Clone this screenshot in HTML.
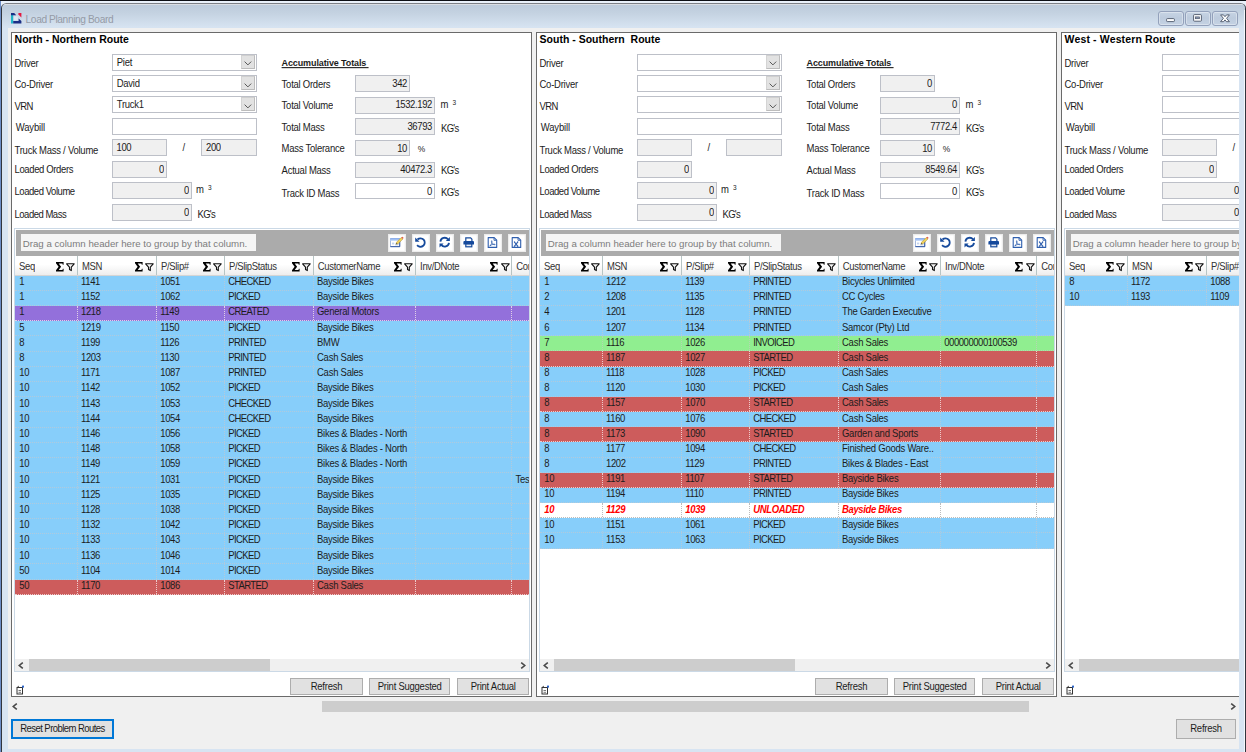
<!DOCTYPE html><html><head><meta charset="utf-8"><title>Load Planning Board</title><style>
*{box-sizing:border-box;margin:0;padding:0}
html,body{width:1246px;height:752px;overflow:hidden}
body{position:relative;background:#e9f1fa;font-family:"Liberation Sans",sans-serif;font-size:9.5px;letter-spacing:-0.25px;color:#1c1c1c;line-height:1}
.a{position:absolute}
.t{position:absolute;white-space:pre;line-height:12px;height:12px;transform:scaleY(1.09);transform-origin:0 9.1px}
i{display:inline-block;font-style:inherit;transform:scaleY(1.09);transform-origin:0 9.4px}
.b{font-weight:bold}
.win{position:absolute;left:1px;top:3px;width:1245px;height:770px;border:1px solid #30353d;border-top-color:#7d8187;border-radius:5.5px 5.5px 0 0;background:#d7e4f2;overflow:hidden}
.tbar{position:absolute;left:0;top:0;width:1243px;height:24px;background:linear-gradient(#dadee4 0,#dadee4 1px,#bccbdb 1px,#c4d2e1 9px,#d6e3f1 23px)}
.client{position:absolute;left:8px;top:28px;width:1231px;height:721px;background:#f0f0f0;overflow:hidden}
.panel{position:absolute;top:4px;width:521px;height:665px;background:#fff;border:1px solid #6a6a6a}
.box{position:absolute;border:1px solid #bdc0c8;background:#fff}
.ro{background:#f0f0f0}
.val{position:absolute;white-space:pre;line-height:12px;height:12px}
.dd{position:absolute;right:1px;top:0;bottom:1px;width:14px;background:#e2e2e2;border:1px solid #bcbcbc;border-top-color:#cfcfcf;border-left-color:#d4d4d4}
.grid{position:absolute;left:3px;top:196px;width:516px;height:444px;border:1px solid #cbd9e6;background:#fff;overflow:hidden}
.gp{position:absolute;left:1px;top:1px;width:513px;height:25.5px;background:#ababab}
.prompt{position:absolute;left:4.5px;top:4.4px;width:235.6px;height:16.5px;background:#f5f5f5;color:#7c7c7c;font-size:9.7px;letter-spacing:0;line-height:19.8px;padding-left:2.2px;overflow:hidden;white-space:pre}
.tb{position:absolute;top:3.6px;width:18.4px;height:18.4px;background:#fff;box-shadow:inset 0 0 0 1.3px #ececec}
.hdr{position:absolute;left:0;top:26.5px;width:514px;height:20.5px;background:linear-gradient(#fff 0,#fff 45%,#ededed 100%);border-bottom:1px solid #d5d5d5}
.hc{position:absolute;top:0;height:19.5px;border-right:1px solid #b7c4c4}
.hc span{position:absolute;left:4.0px;top:5.5px;line-height:12px;white-space:pre;color:#333;letter-spacing:-0.35px;transform:scaleY(1.09);transform-origin:0 9.1px}
.row{position:absolute;left:0;width:514px;border-bottom:1px dotted rgba(205,200,200,.6)}
.c{position:absolute;top:0;height:100%;border-right:1px dotted rgba(205,200,200,.6);white-space:pre;overflow:hidden;padding-left:3.2px}
.hl,.hl .c{border-color:rgba(245,232,232,.8)}
.hw,.hw .c{border-color:rgba(165,165,165,.75)}
.btn{position:absolute;background:#e1e1e1;border:1px solid #adadad;text-align:center;white-space:pre}
.sb{position:absolute;background:#f0f0f0}
.thumb{position:absolute;background:#cdcdcd}
</style></head><body>
<div class="a" style="left:0;top:0;width:1246px;height:1px;background:#0c0f14"></div>
<div class="a" style="left:0;top:1px;width:1px;height:751px;background:#6c8dc6"></div>
<div class="a" style="left:1244px;top:10px;width:1px;height:742px;background:#f3f7fc;z-index:3"></div>
<div class="win"><div class="tbar"></div>
<svg class="a" style="left:9px;top:9px" width="11" height="11" viewBox="0 0 11 11"><rect x="0" y="0" width="2.2" height="10.5" fill="#1fb5c8"/><path d="M0 0H3.2L5.2 2.2H0Z" fill="#1a2f86"/><path d="M2.2 8H7.6L7.6 5.4L10.4 8V10.5H2.2Z" fill="#1a2f86"/><path d="M7.4 0H10.4V4.6L7.4 1.6Z" fill="#e5173f"/><rect x="2.8" y="3.2" width="4" height="4" fill="#dde7f3"/></svg>
<div class="t" style="left:23.6px;top:9.9px;font-size:10.2px;letter-spacing:-0.4px;color:#959ba7;line-height:12px;transform:none">Load Planning Board</div>
<div class="a" style="left:1156px;top:7px;width:26px;height:15px;border:1px solid #93a1bb;border-radius:3px;background:linear-gradient(#c7d4e4,#bdcbdd 45%,#c4d2e3);box-shadow:inset 0 0 0 1px rgba(255,255,255,.35)"><svg class="a" style="left:7px;top:6px" width="10" height="5" viewBox="0 0 10 5"><rect x="0.6" y="0.6" width="7.8" height="3" rx="0.8" fill="#fff" stroke="#4a5568" stroke-width="0.9"/></svg></div>
<div class="a" style="left:1183px;top:7px;width:26px;height:15px;border:1px solid #93a1bb;border-radius:3px;background:linear-gradient(#c7d4e4,#bdcbdd 45%,#c4d2e3);box-shadow:inset 0 0 0 1px rgba(255,255,255,.35)"><svg class="a" style="left:7.3px;top:2.2px" width="10" height="9" viewBox="0 0 10 9"><rect x="0.6" y="0.6" width="7.8" height="6.6" rx="0.8" fill="#fff" stroke="#4a5568" stroke-width="0.9"/><rect x="2.6" y="2.9" width="3.8" height="1.8" fill="#8c9bb8" stroke="#4a5568" stroke-width="0.7"/></svg></div>
<div class="a" style="left:1210px;top:7px;width:26px;height:15px;border:1px solid #93a1bb;border-radius:3px;background:linear-gradient(#c7d4e4,#bdcbdd 45%,#c4d2e3);box-shadow:inset 0 0 0 1px rgba(255,255,255,.35)"><svg class="a" style="left:6.5px;top:1.5px" width="11" height="9" viewBox="0 0 11 9"><path d="M0.6 0.9L3.5 0.9L5 2.7L6.5 0.9L9.4 0.9L6.6 4.3L9.4 7.7L6.5 7.7L5 5.9L3.5 7.7L0.6 7.7L3.4 4.3Z" fill="#fff" stroke="#4a5568" stroke-width="0.9" stroke-linejoin="round"/></svg></div>
</div>
<div class="client">
<div class="panel" style="left:3px">
<div class="t b" style="left:2.60px;top:-0.30px;font-size:10.5px;letter-spacing:0;line-height:13px;height:13px;color:#000;transform:scaleY(1.03);">North - Northern Route</div>
<div class="t " style="left:2.50px;top:24.96px;">Driver</div>
<div class="t " style="left:2.50px;top:45.96px;">Co-Driver</div>
<div class="t " style="left:2.50px;top:67.96px;letter-spacing:-0.6px">VRN</div>
<div class="t " style="left:3.70px;top:88.96px;letter-spacing:-0.14px">Waybill</div>
<div class="t " style="left:2.50px;top:111.96px;">Truck Mass / Volume</div>
<div class="t " style="left:2.50px;top:130.96px;letter-spacing:-0.37px">Loaded Orders</div>
<div class="t " style="left:2.50px;top:152.96px;letter-spacing:-0.45px">Loaded Volume</div>
<div class="t " style="left:2.50px;top:175.96px;letter-spacing:-0.49px">Loaded Mass</div>
<div class="box " style="left:100.10px;top:21.10px;width:144.90px;height:16.50px"><div class="dd"><svg class="a" style="left:2.4px;top:5.4px" width="8" height="5" viewBox="0 0 8 5"><path d="M0.6 0.6L3.9 3.9L7.2 0.6" fill="none" stroke="#575757" stroke-width="1"/></svg></div></div>
<div class="t " style="left:104.70px;top:23.96px;">Piet</div>
<div class="box " style="left:100.10px;top:42.40px;width:144.90px;height:16.50px"><div class="dd"><svg class="a" style="left:2.4px;top:5.4px" width="8" height="5" viewBox="0 0 8 5"><path d="M0.6 0.6L3.9 3.9L7.2 0.6" fill="none" stroke="#575757" stroke-width="1"/></svg></div></div>
<div class="t " style="left:104.70px;top:44.96px;">David</div>
<div class="box " style="left:100.10px;top:63.30px;width:144.90px;height:16.50px"><div class="dd"><svg class="a" style="left:2.4px;top:5.4px" width="8" height="5" viewBox="0 0 8 5"><path d="M0.6 0.6L3.9 3.9L7.2 0.6" fill="none" stroke="#575757" stroke-width="1"/></svg></div></div>
<div class="t " style="left:104.70px;top:65.96px;">Truck1</div>
<div class="box " style="left:100.10px;top:85.40px;width:144.90px;height:16.60px"></div>
<div class="box ro" style="left:100.10px;top:106.40px;width:54.70px;height:16.30px"></div>
<div class="t " style="left:104.50px;top:108.96px;letter-spacing:-0.4px">100</div>
<div class="t " style="left:170.40px;top:108.96px;">/</div>
<div class="box ro" style="left:189.00px;top:106.40px;width:56.00px;height:16.30px"></div>
<div class="t " style="left:194.00px;top:108.96px;letter-spacing:-0.4px">200</div>
<div class="box ro" style="left:100.10px;top:128.20px;width:54.70px;height:16.40px"></div><div class="t" style="right:367.20px;top:130.96px;letter-spacing:-0.4px">0</div>
<div class="box ro" style="left:100.10px;top:149.40px;width:79.70px;height:16.30px"></div><div class="t" style="right:342.20px;top:151.96px;letter-spacing:-0.4px">0</div>
<div class="t " style="left:183.90px;top:150.96px;">m</div>
<div class="t " style="left:196.00px;top:148.95px;font-size:6.5px;">3</div>
<div class="box ro" style="left:100.10px;top:171.30px;width:79.70px;height:16.30px"></div><div class="t" style="right:342.20px;top:173.96px;letter-spacing:-0.4px">0</div>
<div class="t " style="left:185.50px;top:175.96px;letter-spacing:-0.7px">KG&#x27;s</div>
<div class="t b" style="left:269.60px;top:24.13px;font-size:9px;letter-spacing:-0.12px;text-decoration:underline">Accumulative Totals </div>
<div class="t " style="left:269.60px;top:45.96px;">Total Orders</div>
<div class="t " style="left:269.60px;top:66.96px;">Total Volume</div>
<div class="t " style="left:269.60px;top:88.96px;">Total Mass</div>
<div class="t " style="left:269.60px;top:109.96px;">Mass Tolerance</div>
<div class="t " style="left:269.60px;top:131.96px;">Actual Mass</div>
<div class="t " style="left:269.60px;top:154.96px;">Track ID Mass</div>
<div class="box ro" style="left:343.20px;top:42.40px;width:54.80px;height:16.30px"></div><div class="t" style="right:124.00px;top:44.96px;letter-spacing:-0.4px">342</div>
<div class="box ro" style="left:343.20px;top:64.00px;width:79.70px;height:16.70px"></div><div class="t" style="right:99.10px;top:65.96px;letter-spacing:-0.4px">1532.192</div>
<div class="t " style="left:428.50px;top:65.96px;">m</div>
<div class="t " style="left:440.40px;top:63.95px;font-size:6.5px;">3</div>
<div class="box ro" style="left:343.20px;top:85.40px;width:79.70px;height:16.40px"></div><div class="t" style="right:99.10px;top:87.96px;letter-spacing:-0.4px">36793</div>
<div class="t " style="left:429.00px;top:89.96px;letter-spacing:-0.7px">KG&#x27;s</div>
<div class="box ro" style="left:343.20px;top:107.40px;width:54.80px;height:16.10px"></div><div class="t" style="right:124.00px;top:109.96px;letter-spacing:-0.4px">10</div>
<div class="t " style="left:405.80px;top:110.32px;font-size:8.4px;letter-spacing:0">%</div>
<div class="box ro" style="left:343.20px;top:129.10px;width:79.70px;height:16.10px"></div><div class="t" style="right:99.10px;top:130.96px;letter-spacing:-0.4px">40472.3</div>
<div class="t " style="left:429.00px;top:131.96px;letter-spacing:-0.7px">KG&#x27;s</div>
<div class="box " style="left:343.20px;top:150.30px;width:79.70px;height:16.20px"></div><div class="t" style="right:99.10px;top:152.96px;letter-spacing:-0.4px">0</div>
<div class="t " style="left:429.00px;top:153.96px;letter-spacing:-0.7px">KG&#x27;s</div>
<div class="grid" style="left:2.00px;top:195.00px;width:516.00px;height:444.00px">
<div class="gp"><div class="prompt">Drag a column header here to group by that column.</div>
<div class="tb" style="left:372.10px"><svg width="18" height="18" viewBox="0 0 18 18"><defs><linearGradient id="gh" x1="0" y1="0" x2="0" y2="1"><stop offset="0" stop-color="#7fa8ee"/><stop offset="1" stop-color="#c9dcfa"/></linearGradient></defs><rect x="2.6" y="4.6" width="9" height="8" fill="#fff" stroke="#8fa9d6" stroke-width="0.8"/><rect x="2.3" y="4.3" width="9.6" height="2.6" fill="url(#gh)"/><path d="M2.4 12.7H11.8V7" fill="none" stroke="#2f55a4" stroke-width="1"/><rect x="4" y="8.6" width="2.2" height="1.8" fill="#c3d3ee"/><rect x="7" y="9.8" width="3.6" height="1.6" fill="#c3d3ee"/><path d="M8.1 10.2L8.6 8.2L13.2 3.6L14.8 5.1L10.1 9.8Z" fill="#f2d35c" stroke="#a5882a" stroke-width="0.5"/><path d="M13.2 3.6L14 2.9Q14.9 2.6 15.4 3.4Q15.8 4.2 14.8 5.1Z" fill="#e0604f"/><path d="M8.1 10.2L8.45 8.9L9.4 9.8Z" fill="#333"/></svg></div>
<div class="tb" style="left:396.10px"><svg width="18" height="18" viewBox="0 0 18 18"><path d="M5.5 5.5A4.25 4.25 0 1 1 5.1 11.1" fill="none" stroke="#164a9c" stroke-width="1.8"/><path d="M3.2 3.5V7.8H7.6Z" fill="#164a9c"/></svg></div>
<div class="tb" style="left:420.10px"><svg width="18" height="18" viewBox="0 0 18 18"><path d="M4.4 7.6A4.3 4.3 0 0 1 12.1 5.5" fill="none" stroke="#164a9c" stroke-width="1.8"/><path d="M13 8.8A4.3 4.3 0 0 1 5.3 10.9" fill="none" stroke="#164a9c" stroke-width="1.8"/><path d="M13.9 2.9V7H9.8Z" fill="#164a9c"/><path d="M3.5 13.5V9.4H7.6Z" fill="#164a9c"/></svg></div>
<div class="tb" style="left:444.10px"><svg width="18" height="18" viewBox="0 0 18 18"><path d="M5.8 7.4V3.9H10.6L11.9 5.2V7.4" fill="#fff" stroke="#164a9c" stroke-width="1.2"/><path d="M4.5 7H13Q14 7 14 8V10.6H3.4V8Q3.4 7 4.5 7Z" fill="#164a9c"/><rect x="5.8" y="10" width="6" height="2.8" fill="#e4e9f2" stroke="#164a9c" stroke-width="1.2"/></svg></div>
<div class="tb" style="left:468.10px"><svg width="18" height="18" viewBox="0 0 18 18"><path d="M4.2 3.6H10.2L12.7 6.1V13.4H4.2Z" fill="#fff" stroke="#2f5fae" stroke-width="1.1" stroke-linejoin="round"/><path d="M10 3.8V6.3H12.5" fill="none" stroke="#2f5fae" stroke-width="0.9"/><path d="M5.8 12C7.2 10.6 8.2 8.4 8 6.9C7.7 6.2 7.2 7 7.6 8.2C8.2 9.7 9.5 10.8 11.1 10.8C11.7 10.4 10.5 10 9.2 10.3C7.8 10.6 6.5 11.3 5.8 12Z" fill="none" stroke="#2f5fae" stroke-width="0.75"/></svg></div>
<div class="tb" style="left:492.10px"><svg width="18" height="18" viewBox="0 0 18 18"><path d="M4.2 3.6H10.2L12.7 6.1V13.4H4.2Z" fill="#fff" stroke="#2f5fae" stroke-width="1.1" stroke-linejoin="round"/><path d="M10 3.8V6.3H12.5" fill="none" stroke="#2f5fae" stroke-width="0.9"/><path d="M6.3 7.9L9.9 12.3M9.9 7.9L6.3 12.3" fill="none" stroke="#2f5fae" stroke-width="1.1"/><path d="M5.8 12.4H7.2M9 12.4H10.4M5.9 7.8H7.1M9.1 7.8H10.3" stroke="#2f5fae" stroke-width="0.7"/></svg></div>
</div>
<div class="hdr">
<div class="hc" style="left:0.00px;width:62.90px"><span>Seq</span>
<svg class="a" style="left:40.90px;top:6.0px" width="8" height="10" viewBox="0 0 8 10"><path d="M0 0H7.6V2.8H6.8L6.4 1.5H2.7L5.1 4.8L2.7 8H6.4L6.9 6.7H7.6V9.4H0V8.3L2.6 4.8L0 1.3Z" fill="#000"/></svg>
<svg class="a" style="left:51.30px;top:7.0px" width="9" height="9" viewBox="0 0 9 9"><path d="M0.6 0.8H8.2L5.3 4.2V7.6L3.5 6.6V4.2Z" fill="#f4f4f4" stroke="#111" stroke-width="1.1" stroke-linejoin="round"/></svg>
</div>
<div class="hc" style="left:62.90px;width:79.20px"><span>MSN</span>
<svg class="a" style="left:57.20px;top:6.0px" width="8" height="10" viewBox="0 0 8 10"><path d="M0 0H7.6V2.8H6.8L6.4 1.5H2.7L5.1 4.8L2.7 8H6.4L6.9 6.7H7.6V9.4H0V8.3L2.6 4.8L0 1.3Z" fill="#000"/></svg>
<svg class="a" style="left:67.60px;top:7.0px" width="9" height="9" viewBox="0 0 9 9"><path d="M0.6 0.8H8.2L5.3 4.2V7.6L3.5 6.6V4.2Z" fill="#f4f4f4" stroke="#111" stroke-width="1.1" stroke-linejoin="round"/></svg>
</div>
<div class="hc" style="left:142.10px;width:67.90px"><span>P/Slip#</span>
<svg class="a" style="left:45.90px;top:6.0px" width="8" height="10" viewBox="0 0 8 10"><path d="M0 0H7.6V2.8H6.8L6.4 1.5H2.7L5.1 4.8L2.7 8H6.4L6.9 6.7H7.6V9.4H0V8.3L2.6 4.8L0 1.3Z" fill="#000"/></svg>
<svg class="a" style="left:56.30px;top:7.0px" width="9" height="9" viewBox="0 0 9 9"><path d="M0.6 0.8H8.2L5.3 4.2V7.6L3.5 6.6V4.2Z" fill="#f4f4f4" stroke="#111" stroke-width="1.1" stroke-linejoin="round"/></svg>
</div>
<div class="hc" style="left:210.00px;width:88.80px"><span>P/SlipStatus</span>
<svg class="a" style="left:66.80px;top:6.0px" width="8" height="10" viewBox="0 0 8 10"><path d="M0 0H7.6V2.8H6.8L6.4 1.5H2.7L5.1 4.8L2.7 8H6.4L6.9 6.7H7.6V9.4H0V8.3L2.6 4.8L0 1.3Z" fill="#000"/></svg>
<svg class="a" style="left:77.20px;top:7.0px" width="9" height="9" viewBox="0 0 9 9"><path d="M0.6 0.8H8.2L5.3 4.2V7.6L3.5 6.6V4.2Z" fill="#f4f4f4" stroke="#111" stroke-width="1.1" stroke-linejoin="round"/></svg>
</div>
<div class="hc" style="left:298.80px;width:102.30px"><span>CustomerName</span>
<svg class="a" style="left:80.30px;top:6.0px" width="8" height="10" viewBox="0 0 8 10"><path d="M0 0H7.6V2.8H6.8L6.4 1.5H2.7L5.1 4.8L2.7 8H6.4L6.9 6.7H7.6V9.4H0V8.3L2.6 4.8L0 1.3Z" fill="#000"/></svg>
<svg class="a" style="left:90.70px;top:7.0px" width="9" height="9" viewBox="0 0 9 9"><path d="M0.6 0.8H8.2L5.3 4.2V7.6L3.5 6.6V4.2Z" fill="#f4f4f4" stroke="#111" stroke-width="1.1" stroke-linejoin="round"/></svg>
</div>
<div class="hc" style="left:401.10px;width:96.10px"><span>Inv/DNote</span>
<svg class="a" style="left:74.10px;top:6.0px" width="8" height="10" viewBox="0 0 8 10"><path d="M0 0H7.6V2.8H6.8L6.4 1.5H2.7L5.1 4.8L2.7 8H6.4L6.9 6.7H7.6V9.4H0V8.3L2.6 4.8L0 1.3Z" fill="#000"/></svg>
<svg class="a" style="left:84.50px;top:7.0px" width="9" height="9" viewBox="0 0 9 9"><path d="M0.6 0.8H8.2L5.3 4.2V7.6L3.5 6.6V4.2Z" fill="#f4f4f4" stroke="#111" stroke-width="1.1" stroke-linejoin="round"/></svg>
</div>
<div class="hc" style="left:497.20px;width:40.00px"><span>Cor</span>
</div>
</div>
<div class="row" style="top:47px;height:15px;background:#87cefa;line-height:12.10px;">
<div class="c" style="left:0.00px;width:62.90px;padding-left:4.3px;letter-spacing:-0.4px;"><i>1</i></div>
<div class="c" style="left:62.90px;width:79.20px;letter-spacing:-0.4px;"><i>1141</i></div>
<div class="c" style="left:142.10px;width:67.90px;letter-spacing:-0.4px;"><i>1051</i></div>
<div class="c" style="left:210.00px;width:88.80px;letter-spacing:-0.6px;"><i>CHECKED</i></div>
<div class="c" style="left:298.80px;width:102.30px;"><i>Bayside Bikes</i></div>
<div class="c" style="left:401.10px;width:96.10px;letter-spacing:-0.45px;"></div>
<div class="c" style="left:497.20px;width:40.00px;"></div>
</div>
<div class="row" style="top:62px;height:15px;background:#87cefa;line-height:12.50px;">
<div class="c" style="left:0.00px;width:62.90px;padding-left:4.3px;letter-spacing:-0.4px;"><i>1</i></div>
<div class="c" style="left:62.90px;width:79.20px;letter-spacing:-0.4px;"><i>1152</i></div>
<div class="c" style="left:142.10px;width:67.90px;letter-spacing:-0.4px;"><i>1062</i></div>
<div class="c" style="left:210.00px;width:88.80px;letter-spacing:-0.6px;"><i>PICKED</i></div>
<div class="c" style="left:298.80px;width:102.30px;"><i>Bayside Bikes</i></div>
<div class="c" style="left:401.10px;width:96.10px;letter-spacing:-0.45px;"></div>
<div class="c" style="left:497.20px;width:40.00px;"></div>
</div>
<div class="row hl" style="top:77px;height:15px;background:#9370db;line-height:12.90px;">
<div class="c" style="left:0.00px;width:62.90px;padding-left:4.3px;letter-spacing:-0.4px;"><i>1</i></div>
<div class="c" style="left:62.90px;width:79.20px;letter-spacing:-0.4px;"><i>1218</i></div>
<div class="c" style="left:142.10px;width:67.90px;letter-spacing:-0.4px;"><i>1149</i></div>
<div class="c" style="left:210.00px;width:88.80px;letter-spacing:-0.6px;"><i>CREATED</i></div>
<div class="c" style="left:298.80px;width:102.30px;"><i>General Motors</i></div>
<div class="c" style="left:401.10px;width:96.10px;letter-spacing:-0.45px;"></div>
<div class="c" style="left:497.20px;width:40.00px;"></div>
</div>
<div class="row" style="top:92px;height:15px;background:#87cefa;line-height:13.30px;">
<div class="c" style="left:0.00px;width:62.90px;padding-left:4.3px;letter-spacing:-0.4px;"><i>5</i></div>
<div class="c" style="left:62.90px;width:79.20px;letter-spacing:-0.4px;"><i>1219</i></div>
<div class="c" style="left:142.10px;width:67.90px;letter-spacing:-0.4px;"><i>1150</i></div>
<div class="c" style="left:210.00px;width:88.80px;letter-spacing:-0.6px;"><i>PICKED</i></div>
<div class="c" style="left:298.80px;width:102.30px;"><i>Bayside Bikes</i></div>
<div class="c" style="left:401.10px;width:96.10px;letter-spacing:-0.45px;"></div>
<div class="c" style="left:497.20px;width:40.00px;"></div>
</div>
<div class="row" style="top:107px;height:16px;background:#87cefa;line-height:13.70px;">
<div class="c" style="left:0.00px;width:62.90px;padding-left:4.3px;letter-spacing:-0.4px;"><i>8</i></div>
<div class="c" style="left:62.90px;width:79.20px;letter-spacing:-0.4px;"><i>1199</i></div>
<div class="c" style="left:142.10px;width:67.90px;letter-spacing:-0.4px;"><i>1126</i></div>
<div class="c" style="left:210.00px;width:88.80px;letter-spacing:-0.6px;"><i>PRINTED</i></div>
<div class="c" style="left:298.80px;width:102.30px;"><i>BMW</i></div>
<div class="c" style="left:401.10px;width:96.10px;letter-spacing:-0.45px;"></div>
<div class="c" style="left:497.20px;width:40.00px;"></div>
</div>
<div class="row" style="top:123px;height:15px;background:#87cefa;line-height:12.10px;">
<div class="c" style="left:0.00px;width:62.90px;padding-left:4.3px;letter-spacing:-0.4px;"><i>8</i></div>
<div class="c" style="left:62.90px;width:79.20px;letter-spacing:-0.4px;"><i>1203</i></div>
<div class="c" style="left:142.10px;width:67.90px;letter-spacing:-0.4px;"><i>1130</i></div>
<div class="c" style="left:210.00px;width:88.80px;letter-spacing:-0.6px;"><i>PRINTED</i></div>
<div class="c" style="left:298.80px;width:102.30px;"><i>Cash Sales</i></div>
<div class="c" style="left:401.10px;width:96.10px;letter-spacing:-0.45px;"></div>
<div class="c" style="left:497.20px;width:40.00px;"></div>
</div>
<div class="row" style="top:138px;height:15px;background:#87cefa;line-height:12.50px;">
<div class="c" style="left:0.00px;width:62.90px;padding-left:4.3px;letter-spacing:-0.4px;"><i>10</i></div>
<div class="c" style="left:62.90px;width:79.20px;letter-spacing:-0.4px;"><i>1171</i></div>
<div class="c" style="left:142.10px;width:67.90px;letter-spacing:-0.4px;"><i>1087</i></div>
<div class="c" style="left:210.00px;width:88.80px;letter-spacing:-0.6px;"><i>PRINTED</i></div>
<div class="c" style="left:298.80px;width:102.30px;"><i>Cash Sales</i></div>
<div class="c" style="left:401.10px;width:96.10px;letter-spacing:-0.45px;"></div>
<div class="c" style="left:497.20px;width:40.00px;"></div>
</div>
<div class="row" style="top:153px;height:15px;background:#87cefa;line-height:12.90px;">
<div class="c" style="left:0.00px;width:62.90px;padding-left:4.3px;letter-spacing:-0.4px;"><i>10</i></div>
<div class="c" style="left:62.90px;width:79.20px;letter-spacing:-0.4px;"><i>1142</i></div>
<div class="c" style="left:142.10px;width:67.90px;letter-spacing:-0.4px;"><i>1052</i></div>
<div class="c" style="left:210.00px;width:88.80px;letter-spacing:-0.6px;"><i>PICKED</i></div>
<div class="c" style="left:298.80px;width:102.30px;"><i>Bayside Bikes</i></div>
<div class="c" style="left:401.10px;width:96.10px;letter-spacing:-0.45px;"></div>
<div class="c" style="left:497.20px;width:40.00px;"></div>
</div>
<div class="row" style="top:168px;height:15px;background:#87cefa;line-height:13.30px;">
<div class="c" style="left:0.00px;width:62.90px;padding-left:4.3px;letter-spacing:-0.4px;"><i>10</i></div>
<div class="c" style="left:62.90px;width:79.20px;letter-spacing:-0.4px;"><i>1143</i></div>
<div class="c" style="left:142.10px;width:67.90px;letter-spacing:-0.4px;"><i>1053</i></div>
<div class="c" style="left:210.00px;width:88.80px;letter-spacing:-0.6px;"><i>CHECKED</i></div>
<div class="c" style="left:298.80px;width:102.30px;"><i>Bayside Bikes</i></div>
<div class="c" style="left:401.10px;width:96.10px;letter-spacing:-0.45px;"></div>
<div class="c" style="left:497.20px;width:40.00px;"></div>
</div>
<div class="row" style="top:183px;height:16px;background:#87cefa;line-height:13.70px;">
<div class="c" style="left:0.00px;width:62.90px;padding-left:4.3px;letter-spacing:-0.4px;"><i>10</i></div>
<div class="c" style="left:62.90px;width:79.20px;letter-spacing:-0.4px;"><i>1144</i></div>
<div class="c" style="left:142.10px;width:67.90px;letter-spacing:-0.4px;"><i>1054</i></div>
<div class="c" style="left:210.00px;width:88.80px;letter-spacing:-0.6px;"><i>CHECKED</i></div>
<div class="c" style="left:298.80px;width:102.30px;"><i>Bayside Bikes</i></div>
<div class="c" style="left:401.10px;width:96.10px;letter-spacing:-0.45px;"></div>
<div class="c" style="left:497.20px;width:40.00px;"></div>
</div>
<div class="row" style="top:199px;height:15px;background:#87cefa;line-height:12.10px;">
<div class="c" style="left:0.00px;width:62.90px;padding-left:4.3px;letter-spacing:-0.4px;"><i>10</i></div>
<div class="c" style="left:62.90px;width:79.20px;letter-spacing:-0.4px;"><i>1146</i></div>
<div class="c" style="left:142.10px;width:67.90px;letter-spacing:-0.4px;"><i>1056</i></div>
<div class="c" style="left:210.00px;width:88.80px;letter-spacing:-0.6px;"><i>PICKED</i></div>
<div class="c" style="left:298.80px;width:102.30px;"><i>Bikes &amp; Blades - North</i></div>
<div class="c" style="left:401.10px;width:96.10px;letter-spacing:-0.45px;"></div>
<div class="c" style="left:497.20px;width:40.00px;"></div>
</div>
<div class="row" style="top:214px;height:15px;background:#87cefa;line-height:12.50px;">
<div class="c" style="left:0.00px;width:62.90px;padding-left:4.3px;letter-spacing:-0.4px;"><i>10</i></div>
<div class="c" style="left:62.90px;width:79.20px;letter-spacing:-0.4px;"><i>1148</i></div>
<div class="c" style="left:142.10px;width:67.90px;letter-spacing:-0.4px;"><i>1058</i></div>
<div class="c" style="left:210.00px;width:88.80px;letter-spacing:-0.6px;"><i>PICKED</i></div>
<div class="c" style="left:298.80px;width:102.30px;"><i>Bikes &amp; Blades - North</i></div>
<div class="c" style="left:401.10px;width:96.10px;letter-spacing:-0.45px;"></div>
<div class="c" style="left:497.20px;width:40.00px;"></div>
</div>
<div class="row" style="top:229px;height:15px;background:#87cefa;line-height:12.90px;">
<div class="c" style="left:0.00px;width:62.90px;padding-left:4.3px;letter-spacing:-0.4px;"><i>10</i></div>
<div class="c" style="left:62.90px;width:79.20px;letter-spacing:-0.4px;"><i>1149</i></div>
<div class="c" style="left:142.10px;width:67.90px;letter-spacing:-0.4px;"><i>1059</i></div>
<div class="c" style="left:210.00px;width:88.80px;letter-spacing:-0.6px;"><i>PICKED</i></div>
<div class="c" style="left:298.80px;width:102.30px;"><i>Bikes &amp; Blades - North</i></div>
<div class="c" style="left:401.10px;width:96.10px;letter-spacing:-0.45px;"></div>
<div class="c" style="left:497.20px;width:40.00px;"></div>
</div>
<div class="row" style="top:244px;height:15px;background:#87cefa;line-height:13.30px;">
<div class="c" style="left:0.00px;width:62.90px;padding-left:4.3px;letter-spacing:-0.4px;"><i>10</i></div>
<div class="c" style="left:62.90px;width:79.20px;letter-spacing:-0.4px;"><i>1121</i></div>
<div class="c" style="left:142.10px;width:67.90px;letter-spacing:-0.4px;"><i>1031</i></div>
<div class="c" style="left:210.00px;width:88.80px;letter-spacing:-0.6px;"><i>PICKED</i></div>
<div class="c" style="left:298.80px;width:102.30px;"><i>Bayside Bikes</i></div>
<div class="c" style="left:401.10px;width:96.10px;letter-spacing:-0.45px;"></div>
<div class="c" style="left:497.20px;width:40.00px;"><i>Test</i></div>
</div>
<div class="row" style="top:259px;height:16px;background:#87cefa;line-height:13.70px;">
<div class="c" style="left:0.00px;width:62.90px;padding-left:4.3px;letter-spacing:-0.4px;"><i>10</i></div>
<div class="c" style="left:62.90px;width:79.20px;letter-spacing:-0.4px;"><i>1125</i></div>
<div class="c" style="left:142.10px;width:67.90px;letter-spacing:-0.4px;"><i>1035</i></div>
<div class="c" style="left:210.00px;width:88.80px;letter-spacing:-0.6px;"><i>PICKED</i></div>
<div class="c" style="left:298.80px;width:102.30px;"><i>Bayside Bikes</i></div>
<div class="c" style="left:401.10px;width:96.10px;letter-spacing:-0.45px;"></div>
<div class="c" style="left:497.20px;width:40.00px;"></div>
</div>
<div class="row" style="top:275px;height:15px;background:#87cefa;line-height:12.10px;">
<div class="c" style="left:0.00px;width:62.90px;padding-left:4.3px;letter-spacing:-0.4px;"><i>10</i></div>
<div class="c" style="left:62.90px;width:79.20px;letter-spacing:-0.4px;"><i>1128</i></div>
<div class="c" style="left:142.10px;width:67.90px;letter-spacing:-0.4px;"><i>1038</i></div>
<div class="c" style="left:210.00px;width:88.80px;letter-spacing:-0.6px;"><i>PICKED</i></div>
<div class="c" style="left:298.80px;width:102.30px;"><i>Bayside Bikes</i></div>
<div class="c" style="left:401.10px;width:96.10px;letter-spacing:-0.45px;"></div>
<div class="c" style="left:497.20px;width:40.00px;"></div>
</div>
<div class="row" style="top:290px;height:15px;background:#87cefa;line-height:12.50px;">
<div class="c" style="left:0.00px;width:62.90px;padding-left:4.3px;letter-spacing:-0.4px;"><i>10</i></div>
<div class="c" style="left:62.90px;width:79.20px;letter-spacing:-0.4px;"><i>1132</i></div>
<div class="c" style="left:142.10px;width:67.90px;letter-spacing:-0.4px;"><i>1042</i></div>
<div class="c" style="left:210.00px;width:88.80px;letter-spacing:-0.6px;"><i>PICKED</i></div>
<div class="c" style="left:298.80px;width:102.30px;"><i>Bayside Bikes</i></div>
<div class="c" style="left:401.10px;width:96.10px;letter-spacing:-0.45px;"></div>
<div class="c" style="left:497.20px;width:40.00px;"></div>
</div>
<div class="row" style="top:305px;height:15px;background:#87cefa;line-height:12.90px;">
<div class="c" style="left:0.00px;width:62.90px;padding-left:4.3px;letter-spacing:-0.4px;"><i>10</i></div>
<div class="c" style="left:62.90px;width:79.20px;letter-spacing:-0.4px;"><i>1133</i></div>
<div class="c" style="left:142.10px;width:67.90px;letter-spacing:-0.4px;"><i>1043</i></div>
<div class="c" style="left:210.00px;width:88.80px;letter-spacing:-0.6px;"><i>PICKED</i></div>
<div class="c" style="left:298.80px;width:102.30px;"><i>Bayside Bikes</i></div>
<div class="c" style="left:401.10px;width:96.10px;letter-spacing:-0.45px;"></div>
<div class="c" style="left:497.20px;width:40.00px;"></div>
</div>
<div class="row" style="top:320px;height:15px;background:#87cefa;line-height:13.30px;">
<div class="c" style="left:0.00px;width:62.90px;padding-left:4.3px;letter-spacing:-0.4px;"><i>10</i></div>
<div class="c" style="left:62.90px;width:79.20px;letter-spacing:-0.4px;"><i>1136</i></div>
<div class="c" style="left:142.10px;width:67.90px;letter-spacing:-0.4px;"><i>1046</i></div>
<div class="c" style="left:210.00px;width:88.80px;letter-spacing:-0.6px;"><i>PICKED</i></div>
<div class="c" style="left:298.80px;width:102.30px;"><i>Bayside Bikes</i></div>
<div class="c" style="left:401.10px;width:96.10px;letter-spacing:-0.45px;"></div>
<div class="c" style="left:497.20px;width:40.00px;"></div>
</div>
<div class="row" style="top:335px;height:16px;background:#87cefa;line-height:13.70px;">
<div class="c" style="left:0.00px;width:62.90px;padding-left:4.3px;letter-spacing:-0.4px;"><i>50</i></div>
<div class="c" style="left:62.90px;width:79.20px;letter-spacing:-0.4px;"><i>1104</i></div>
<div class="c" style="left:142.10px;width:67.90px;letter-spacing:-0.4px;"><i>1014</i></div>
<div class="c" style="left:210.00px;width:88.80px;letter-spacing:-0.6px;"><i>PICKED</i></div>
<div class="c" style="left:298.80px;width:102.30px;"><i>Bayside Bikes</i></div>
<div class="c" style="left:401.10px;width:96.10px;letter-spacing:-0.45px;"></div>
<div class="c" style="left:497.20px;width:40.00px;"></div>
</div>
<div class="row hl" style="top:351px;height:15px;background:#cd5c5c;line-height:12.10px;">
<div class="c" style="left:0.00px;width:62.90px;padding-left:4.3px;letter-spacing:-0.4px;"><i>50</i></div>
<div class="c" style="left:62.90px;width:79.20px;letter-spacing:-0.4px;"><i>1170</i></div>
<div class="c" style="left:142.10px;width:67.90px;letter-spacing:-0.4px;"><i>1086</i></div>
<div class="c" style="left:210.00px;width:88.80px;letter-spacing:-0.6px;"><i>STARTED</i></div>
<div class="c" style="left:298.80px;width:102.30px;"><i>Cash Sales</i></div>
<div class="c" style="left:401.10px;width:96.10px;letter-spacing:-0.45px;"></div>
<div class="c" style="left:497.20px;width:40.00px;"></div>
</div>
<div class="sb" style="left:0;top:430.00px;width:514px;height:12.5px">
<svg class="a" style="left:3.4px;top:3px" width="6" height="7" viewBox="0 0 6 7"><path d="M4.8 0.6L1.2 3.5L4.8 6.4" fill="none" stroke="#484848" stroke-width="1.6"/></svg>
<div class="thumb" style="left:14px;top:0;width:241px;height:12.5px"></div>
<svg class="a" style="left:504.5px;top:3px" width="6" height="7" viewBox="0 0 6 7"><path d="M1.2 0.6L4.8 3.5L1.2 6.4" fill="none" stroke="#484848" stroke-width="1.6"/></svg>
</div>
</div>
<svg class="a" style="left:3.8px;top:652.0px" width="9" height="10" viewBox="0 0 9 10"><rect x="1" y="2.5" width="5.5" height="6.5" fill="#fff" stroke="#333" stroke-width="1"/><path d="M2.5 5.5H5M2.5 7.3H5" stroke="#555" stroke-width="0.8"/><rect x="6" y="0.6" width="2" height="2" fill="#2a62c8"/><path d="M1 2.5L3 1" stroke="#333" stroke-width="0.8"/></svg>
<div class="btn" style="left:278.20px;top:645.20px;width:72.60px;height:16.80px;line-height:15.6px"><i>Refresh</i></div>
<div class="btn" style="left:357.40px;top:645.20px;width:80.60px;height:16.80px;line-height:15.6px"><i>Print Suggested</i></div>
<div class="btn" style="left:445.00px;top:645.20px;width:72.40px;height:16.80px;line-height:15.6px"><i>Print Actual</i></div>
</div>
<div class="panel" style="left:528px">
<div class="t b" style="left:2.60px;top:-0.30px;font-size:10.5px;letter-spacing:0;line-height:13px;height:13px;color:#000;transform:scaleY(1.03);">South - Southern  Route</div>
<div class="t " style="left:2.50px;top:24.96px;">Driver</div>
<div class="t " style="left:2.50px;top:45.96px;">Co-Driver</div>
<div class="t " style="left:2.50px;top:67.96px;letter-spacing:-0.6px">VRN</div>
<div class="t " style="left:3.70px;top:88.96px;letter-spacing:-0.14px">Waybill</div>
<div class="t " style="left:2.50px;top:111.96px;">Truck Mass / Volume</div>
<div class="t " style="left:2.50px;top:130.96px;letter-spacing:-0.37px">Loaded Orders</div>
<div class="t " style="left:2.50px;top:152.96px;letter-spacing:-0.45px">Loaded Volume</div>
<div class="t " style="left:2.50px;top:175.96px;letter-spacing:-0.49px">Loaded Mass</div>
<div class="box " style="left:100.10px;top:21.10px;width:144.90px;height:16.50px"><div class="dd"><svg class="a" style="left:2.4px;top:5.4px" width="8" height="5" viewBox="0 0 8 5"><path d="M0.6 0.6L3.9 3.9L7.2 0.6" fill="none" stroke="#575757" stroke-width="1"/></svg></div></div>
<div class="box " style="left:100.10px;top:42.40px;width:144.90px;height:16.50px"><div class="dd"><svg class="a" style="left:2.4px;top:5.4px" width="8" height="5" viewBox="0 0 8 5"><path d="M0.6 0.6L3.9 3.9L7.2 0.6" fill="none" stroke="#575757" stroke-width="1"/></svg></div></div>
<div class="box " style="left:100.10px;top:63.30px;width:144.90px;height:16.50px"><div class="dd"><svg class="a" style="left:2.4px;top:5.4px" width="8" height="5" viewBox="0 0 8 5"><path d="M0.6 0.6L3.9 3.9L7.2 0.6" fill="none" stroke="#575757" stroke-width="1"/></svg></div></div>
<div class="box " style="left:100.10px;top:85.40px;width:144.90px;height:16.60px"></div>
<div class="box ro" style="left:100.10px;top:106.40px;width:54.70px;height:16.30px"></div>
<div class="t " style="left:170.40px;top:108.96px;">/</div>
<div class="box ro" style="left:189.00px;top:106.40px;width:56.00px;height:16.30px"></div>
<div class="box ro" style="left:100.10px;top:128.20px;width:54.70px;height:16.40px"></div><div class="t" style="right:367.20px;top:130.96px;letter-spacing:-0.4px">0</div>
<div class="box ro" style="left:100.10px;top:149.40px;width:79.70px;height:16.30px"></div><div class="t" style="right:342.20px;top:151.96px;letter-spacing:-0.4px">0</div>
<div class="t " style="left:183.90px;top:150.96px;">m</div>
<div class="t " style="left:196.00px;top:148.95px;font-size:6.5px;">3</div>
<div class="box ro" style="left:100.10px;top:171.30px;width:79.70px;height:16.30px"></div><div class="t" style="right:342.20px;top:173.96px;letter-spacing:-0.4px">0</div>
<div class="t " style="left:185.50px;top:175.96px;letter-spacing:-0.7px">KG&#x27;s</div>
<div class="t b" style="left:269.60px;top:24.13px;font-size:9px;letter-spacing:-0.12px;text-decoration:underline">Accumulative Totals </div>
<div class="t " style="left:269.60px;top:45.96px;">Total Orders</div>
<div class="t " style="left:269.60px;top:66.96px;">Total Volume</div>
<div class="t " style="left:269.60px;top:88.96px;">Total Mass</div>
<div class="t " style="left:269.60px;top:109.96px;">Mass Tolerance</div>
<div class="t " style="left:269.60px;top:131.96px;">Actual Mass</div>
<div class="t " style="left:269.60px;top:154.96px;">Track ID Mass</div>
<div class="box ro" style="left:343.20px;top:42.40px;width:54.80px;height:16.30px"></div><div class="t" style="right:124.00px;top:44.96px;letter-spacing:-0.4px">0</div>
<div class="box ro" style="left:343.20px;top:64.00px;width:79.70px;height:16.70px"></div><div class="t" style="right:99.10px;top:65.96px;letter-spacing:-0.4px">0</div>
<div class="t " style="left:428.50px;top:65.96px;">m</div>
<div class="t " style="left:440.40px;top:63.95px;font-size:6.5px;">3</div>
<div class="box ro" style="left:343.20px;top:85.40px;width:79.70px;height:16.40px"></div><div class="t" style="right:99.10px;top:87.96px;letter-spacing:-0.4px">7772.4</div>
<div class="t " style="left:429.00px;top:89.96px;letter-spacing:-0.7px">KG&#x27;s</div>
<div class="box ro" style="left:343.20px;top:107.40px;width:54.80px;height:16.10px"></div><div class="t" style="right:124.00px;top:109.96px;letter-spacing:-0.4px">10</div>
<div class="t " style="left:405.80px;top:110.32px;font-size:8.4px;letter-spacing:0">%</div>
<div class="box ro" style="left:343.20px;top:129.10px;width:79.70px;height:16.10px"></div><div class="t" style="right:99.10px;top:130.96px;letter-spacing:-0.4px">8549.64</div>
<div class="t " style="left:429.00px;top:131.96px;letter-spacing:-0.7px">KG&#x27;s</div>
<div class="box " style="left:343.20px;top:150.30px;width:79.70px;height:16.20px"></div><div class="t" style="right:99.10px;top:152.96px;letter-spacing:-0.4px">0</div>
<div class="t " style="left:429.00px;top:153.96px;letter-spacing:-0.7px">KG&#x27;s</div>
<div class="grid" style="left:2.00px;top:195.00px;width:516.00px;height:444.00px">
<div class="gp"><div class="prompt">Drag a column header here to group by that column.</div>
<div class="tb" style="left:372.10px"><svg width="18" height="18" viewBox="0 0 18 18"><defs><linearGradient id="gh" x1="0" y1="0" x2="0" y2="1"><stop offset="0" stop-color="#7fa8ee"/><stop offset="1" stop-color="#c9dcfa"/></linearGradient></defs><rect x="2.6" y="4.6" width="9" height="8" fill="#fff" stroke="#8fa9d6" stroke-width="0.8"/><rect x="2.3" y="4.3" width="9.6" height="2.6" fill="url(#gh)"/><path d="M2.4 12.7H11.8V7" fill="none" stroke="#2f55a4" stroke-width="1"/><rect x="4" y="8.6" width="2.2" height="1.8" fill="#c3d3ee"/><rect x="7" y="9.8" width="3.6" height="1.6" fill="#c3d3ee"/><path d="M8.1 10.2L8.6 8.2L13.2 3.6L14.8 5.1L10.1 9.8Z" fill="#f2d35c" stroke="#a5882a" stroke-width="0.5"/><path d="M13.2 3.6L14 2.9Q14.9 2.6 15.4 3.4Q15.8 4.2 14.8 5.1Z" fill="#e0604f"/><path d="M8.1 10.2L8.45 8.9L9.4 9.8Z" fill="#333"/></svg></div>
<div class="tb" style="left:396.10px"><svg width="18" height="18" viewBox="0 0 18 18"><path d="M5.5 5.5A4.25 4.25 0 1 1 5.1 11.1" fill="none" stroke="#164a9c" stroke-width="1.8"/><path d="M3.2 3.5V7.8H7.6Z" fill="#164a9c"/></svg></div>
<div class="tb" style="left:420.10px"><svg width="18" height="18" viewBox="0 0 18 18"><path d="M4.4 7.6A4.3 4.3 0 0 1 12.1 5.5" fill="none" stroke="#164a9c" stroke-width="1.8"/><path d="M13 8.8A4.3 4.3 0 0 1 5.3 10.9" fill="none" stroke="#164a9c" stroke-width="1.8"/><path d="M13.9 2.9V7H9.8Z" fill="#164a9c"/><path d="M3.5 13.5V9.4H7.6Z" fill="#164a9c"/></svg></div>
<div class="tb" style="left:444.10px"><svg width="18" height="18" viewBox="0 0 18 18"><path d="M5.8 7.4V3.9H10.6L11.9 5.2V7.4" fill="#fff" stroke="#164a9c" stroke-width="1.2"/><path d="M4.5 7H13Q14 7 14 8V10.6H3.4V8Q3.4 7 4.5 7Z" fill="#164a9c"/><rect x="5.8" y="10" width="6" height="2.8" fill="#e4e9f2" stroke="#164a9c" stroke-width="1.2"/></svg></div>
<div class="tb" style="left:468.10px"><svg width="18" height="18" viewBox="0 0 18 18"><path d="M4.2 3.6H10.2L12.7 6.1V13.4H4.2Z" fill="#fff" stroke="#2f5fae" stroke-width="1.1" stroke-linejoin="round"/><path d="M10 3.8V6.3H12.5" fill="none" stroke="#2f5fae" stroke-width="0.9"/><path d="M5.8 12C7.2 10.6 8.2 8.4 8 6.9C7.7 6.2 7.2 7 7.6 8.2C8.2 9.7 9.5 10.8 11.1 10.8C11.7 10.4 10.5 10 9.2 10.3C7.8 10.6 6.5 11.3 5.8 12Z" fill="none" stroke="#2f5fae" stroke-width="0.75"/></svg></div>
<div class="tb" style="left:492.10px"><svg width="18" height="18" viewBox="0 0 18 18"><path d="M4.2 3.6H10.2L12.7 6.1V13.4H4.2Z" fill="#fff" stroke="#2f5fae" stroke-width="1.1" stroke-linejoin="round"/><path d="M10 3.8V6.3H12.5" fill="none" stroke="#2f5fae" stroke-width="0.9"/><path d="M6.3 7.9L9.9 12.3M9.9 7.9L6.3 12.3" fill="none" stroke="#2f5fae" stroke-width="1.1"/><path d="M5.8 12.4H7.2M9 12.4H10.4M5.9 7.8H7.1M9.1 7.8H10.3" stroke="#2f5fae" stroke-width="0.7"/></svg></div>
</div>
<div class="hdr">
<div class="hc" style="left:0.00px;width:62.90px"><span>Seq</span>
<svg class="a" style="left:40.90px;top:6.0px" width="8" height="10" viewBox="0 0 8 10"><path d="M0 0H7.6V2.8H6.8L6.4 1.5H2.7L5.1 4.8L2.7 8H6.4L6.9 6.7H7.6V9.4H0V8.3L2.6 4.8L0 1.3Z" fill="#000"/></svg>
<svg class="a" style="left:51.30px;top:7.0px" width="9" height="9" viewBox="0 0 9 9"><path d="M0.6 0.8H8.2L5.3 4.2V7.6L3.5 6.6V4.2Z" fill="#f4f4f4" stroke="#111" stroke-width="1.1" stroke-linejoin="round"/></svg>
</div>
<div class="hc" style="left:62.90px;width:79.20px"><span>MSN</span>
<svg class="a" style="left:57.20px;top:6.0px" width="8" height="10" viewBox="0 0 8 10"><path d="M0 0H7.6V2.8H6.8L6.4 1.5H2.7L5.1 4.8L2.7 8H6.4L6.9 6.7H7.6V9.4H0V8.3L2.6 4.8L0 1.3Z" fill="#000"/></svg>
<svg class="a" style="left:67.60px;top:7.0px" width="9" height="9" viewBox="0 0 9 9"><path d="M0.6 0.8H8.2L5.3 4.2V7.6L3.5 6.6V4.2Z" fill="#f4f4f4" stroke="#111" stroke-width="1.1" stroke-linejoin="round"/></svg>
</div>
<div class="hc" style="left:142.10px;width:67.90px"><span>P/Slip#</span>
<svg class="a" style="left:45.90px;top:6.0px" width="8" height="10" viewBox="0 0 8 10"><path d="M0 0H7.6V2.8H6.8L6.4 1.5H2.7L5.1 4.8L2.7 8H6.4L6.9 6.7H7.6V9.4H0V8.3L2.6 4.8L0 1.3Z" fill="#000"/></svg>
<svg class="a" style="left:56.30px;top:7.0px" width="9" height="9" viewBox="0 0 9 9"><path d="M0.6 0.8H8.2L5.3 4.2V7.6L3.5 6.6V4.2Z" fill="#f4f4f4" stroke="#111" stroke-width="1.1" stroke-linejoin="round"/></svg>
</div>
<div class="hc" style="left:210.00px;width:88.80px"><span>P/SlipStatus</span>
<svg class="a" style="left:66.80px;top:6.0px" width="8" height="10" viewBox="0 0 8 10"><path d="M0 0H7.6V2.8H6.8L6.4 1.5H2.7L5.1 4.8L2.7 8H6.4L6.9 6.7H7.6V9.4H0V8.3L2.6 4.8L0 1.3Z" fill="#000"/></svg>
<svg class="a" style="left:77.20px;top:7.0px" width="9" height="9" viewBox="0 0 9 9"><path d="M0.6 0.8H8.2L5.3 4.2V7.6L3.5 6.6V4.2Z" fill="#f4f4f4" stroke="#111" stroke-width="1.1" stroke-linejoin="round"/></svg>
</div>
<div class="hc" style="left:298.80px;width:102.30px"><span>CustomerName</span>
<svg class="a" style="left:80.30px;top:6.0px" width="8" height="10" viewBox="0 0 8 10"><path d="M0 0H7.6V2.8H6.8L6.4 1.5H2.7L5.1 4.8L2.7 8H6.4L6.9 6.7H7.6V9.4H0V8.3L2.6 4.8L0 1.3Z" fill="#000"/></svg>
<svg class="a" style="left:90.70px;top:7.0px" width="9" height="9" viewBox="0 0 9 9"><path d="M0.6 0.8H8.2L5.3 4.2V7.6L3.5 6.6V4.2Z" fill="#f4f4f4" stroke="#111" stroke-width="1.1" stroke-linejoin="round"/></svg>
</div>
<div class="hc" style="left:401.10px;width:96.10px"><span>Inv/DNote</span>
<svg class="a" style="left:74.10px;top:6.0px" width="8" height="10" viewBox="0 0 8 10"><path d="M0 0H7.6V2.8H6.8L6.4 1.5H2.7L5.1 4.8L2.7 8H6.4L6.9 6.7H7.6V9.4H0V8.3L2.6 4.8L0 1.3Z" fill="#000"/></svg>
<svg class="a" style="left:84.50px;top:7.0px" width="9" height="9" viewBox="0 0 9 9"><path d="M0.6 0.8H8.2L5.3 4.2V7.6L3.5 6.6V4.2Z" fill="#f4f4f4" stroke="#111" stroke-width="1.1" stroke-linejoin="round"/></svg>
</div>
<div class="hc" style="left:497.20px;width:40.00px"><span>Cor</span>
</div>
</div>
<div class="row" style="top:47px;height:15px;background:#87cefa;line-height:12.10px;">
<div class="c" style="left:0.00px;width:62.90px;padding-left:4.3px;letter-spacing:-0.4px;"><i>1</i></div>
<div class="c" style="left:62.90px;width:79.20px;letter-spacing:-0.4px;"><i>1212</i></div>
<div class="c" style="left:142.10px;width:67.90px;letter-spacing:-0.4px;"><i>1139</i></div>
<div class="c" style="left:210.00px;width:88.80px;letter-spacing:-0.6px;"><i>PRINTED</i></div>
<div class="c" style="left:298.80px;width:102.30px;"><i>Bicycles Unlimited</i></div>
<div class="c" style="left:401.10px;width:96.10px;letter-spacing:-0.45px;"></div>
<div class="c" style="left:497.20px;width:40.00px;"></div>
</div>
<div class="row" style="top:62px;height:15px;background:#87cefa;line-height:12.44px;">
<div class="c" style="left:0.00px;width:62.90px;padding-left:4.3px;letter-spacing:-0.4px;"><i>2</i></div>
<div class="c" style="left:62.90px;width:79.20px;letter-spacing:-0.4px;"><i>1208</i></div>
<div class="c" style="left:142.10px;width:67.90px;letter-spacing:-0.4px;"><i>1135</i></div>
<div class="c" style="left:210.00px;width:88.80px;letter-spacing:-0.6px;"><i>PRINTED</i></div>
<div class="c" style="left:298.80px;width:102.30px;"><i>CC Cycles</i></div>
<div class="c" style="left:401.10px;width:96.10px;letter-spacing:-0.45px;"></div>
<div class="c" style="left:497.20px;width:40.00px;"></div>
</div>
<div class="row" style="top:77px;height:15px;background:#87cefa;line-height:12.78px;">
<div class="c" style="left:0.00px;width:62.90px;padding-left:4.3px;letter-spacing:-0.4px;"><i>4</i></div>
<div class="c" style="left:62.90px;width:79.20px;letter-spacing:-0.4px;"><i>1201</i></div>
<div class="c" style="left:142.10px;width:67.90px;letter-spacing:-0.4px;"><i>1128</i></div>
<div class="c" style="left:210.00px;width:88.80px;letter-spacing:-0.6px;"><i>PRINTED</i></div>
<div class="c" style="left:298.80px;width:102.30px;"><i>The Garden Executive</i></div>
<div class="c" style="left:401.10px;width:96.10px;letter-spacing:-0.45px;"></div>
<div class="c" style="left:497.20px;width:40.00px;"></div>
</div>
<div class="row" style="top:92px;height:15px;background:#87cefa;line-height:13.12px;">
<div class="c" style="left:0.00px;width:62.90px;padding-left:4.3px;letter-spacing:-0.4px;"><i>6</i></div>
<div class="c" style="left:62.90px;width:79.20px;letter-spacing:-0.4px;"><i>1207</i></div>
<div class="c" style="left:142.10px;width:67.90px;letter-spacing:-0.4px;"><i>1134</i></div>
<div class="c" style="left:210.00px;width:88.80px;letter-spacing:-0.6px;"><i>PRINTED</i></div>
<div class="c" style="left:298.80px;width:102.30px;"><i>Samcor (Pty) Ltd</i></div>
<div class="c" style="left:401.10px;width:96.10px;letter-spacing:-0.45px;"></div>
<div class="c" style="left:497.20px;width:40.00px;"></div>
</div>
<div class="row" style="top:107px;height:15px;background:#90ee90;line-height:13.46px;">
<div class="c" style="left:0.00px;width:62.90px;padding-left:4.3px;letter-spacing:-0.4px;"><i>7</i></div>
<div class="c" style="left:62.90px;width:79.20px;letter-spacing:-0.4px;"><i>1116</i></div>
<div class="c" style="left:142.10px;width:67.90px;letter-spacing:-0.4px;"><i>1026</i></div>
<div class="c" style="left:210.00px;width:88.80px;letter-spacing:-0.6px;"><i>INVOICED</i></div>
<div class="c" style="left:298.80px;width:102.30px;"><i>Cash Sales</i></div>
<div class="c" style="left:401.10px;width:96.10px;letter-spacing:-0.45px;"><i>000000000100539</i></div>
<div class="c" style="left:497.20px;width:40.00px;"></div>
</div>
<div class="row hl" style="top:122px;height:16px;background:#cd5c5c;line-height:13.80px;">
<div class="c" style="left:0.00px;width:62.90px;padding-left:4.3px;letter-spacing:-0.4px;"><i>8</i></div>
<div class="c" style="left:62.90px;width:79.20px;letter-spacing:-0.4px;"><i>1187</i></div>
<div class="c" style="left:142.10px;width:67.90px;letter-spacing:-0.4px;"><i>1027</i></div>
<div class="c" style="left:210.00px;width:88.80px;letter-spacing:-0.6px;"><i>STARTED</i></div>
<div class="c" style="left:298.80px;width:102.30px;"><i>Cash Sales</i></div>
<div class="c" style="left:401.10px;width:96.10px;letter-spacing:-0.45px;"></div>
<div class="c" style="left:497.20px;width:40.00px;"></div>
</div>
<div class="row" style="top:138px;height:15px;background:#87cefa;line-height:12.14px;">
<div class="c" style="left:0.00px;width:62.90px;padding-left:4.3px;letter-spacing:-0.4px;"><i>8</i></div>
<div class="c" style="left:62.90px;width:79.20px;letter-spacing:-0.4px;"><i>1118</i></div>
<div class="c" style="left:142.10px;width:67.90px;letter-spacing:-0.4px;"><i>1028</i></div>
<div class="c" style="left:210.00px;width:88.80px;letter-spacing:-0.6px;"><i>PICKED</i></div>
<div class="c" style="left:298.80px;width:102.30px;"><i>Cash Sales</i></div>
<div class="c" style="left:401.10px;width:96.10px;letter-spacing:-0.45px;"></div>
<div class="c" style="left:497.20px;width:40.00px;"></div>
</div>
<div class="row" style="top:153px;height:15px;background:#87cefa;line-height:12.48px;">
<div class="c" style="left:0.00px;width:62.90px;padding-left:4.3px;letter-spacing:-0.4px;"><i>8</i></div>
<div class="c" style="left:62.90px;width:79.20px;letter-spacing:-0.4px;"><i>1120</i></div>
<div class="c" style="left:142.10px;width:67.90px;letter-spacing:-0.4px;"><i>1030</i></div>
<div class="c" style="left:210.00px;width:88.80px;letter-spacing:-0.6px;"><i>PICKED</i></div>
<div class="c" style="left:298.80px;width:102.30px;"><i>Cash Sales</i></div>
<div class="c" style="left:401.10px;width:96.10px;letter-spacing:-0.45px;"></div>
<div class="c" style="left:497.20px;width:40.00px;"></div>
</div>
<div class="row hl" style="top:168px;height:15px;background:#cd5c5c;line-height:12.82px;">
<div class="c" style="left:0.00px;width:62.90px;padding-left:4.3px;letter-spacing:-0.4px;"><i>8</i></div>
<div class="c" style="left:62.90px;width:79.20px;letter-spacing:-0.4px;"><i>1157</i></div>
<div class="c" style="left:142.10px;width:67.90px;letter-spacing:-0.4px;"><i>1070</i></div>
<div class="c" style="left:210.00px;width:88.80px;letter-spacing:-0.6px;"><i>STARTED</i></div>
<div class="c" style="left:298.80px;width:102.30px;"><i>Cash Sales</i></div>
<div class="c" style="left:401.10px;width:96.10px;letter-spacing:-0.45px;"></div>
<div class="c" style="left:497.20px;width:40.00px;"></div>
</div>
<div class="row" style="top:183px;height:15px;background:#87cefa;line-height:13.16px;">
<div class="c" style="left:0.00px;width:62.90px;padding-left:4.3px;letter-spacing:-0.4px;"><i>8</i></div>
<div class="c" style="left:62.90px;width:79.20px;letter-spacing:-0.4px;"><i>1160</i></div>
<div class="c" style="left:142.10px;width:67.90px;letter-spacing:-0.4px;"><i>1076</i></div>
<div class="c" style="left:210.00px;width:88.80px;letter-spacing:-0.6px;"><i>CHECKED</i></div>
<div class="c" style="left:298.80px;width:102.30px;"><i>Cash Sales</i></div>
<div class="c" style="left:401.10px;width:96.10px;letter-spacing:-0.45px;"></div>
<div class="c" style="left:497.20px;width:40.00px;"></div>
</div>
<div class="row hl" style="top:198px;height:15px;background:#cd5c5c;line-height:13.50px;">
<div class="c" style="left:0.00px;width:62.90px;padding-left:4.3px;letter-spacing:-0.4px;"><i>8</i></div>
<div class="c" style="left:62.90px;width:79.20px;letter-spacing:-0.4px;"><i>1173</i></div>
<div class="c" style="left:142.10px;width:67.90px;letter-spacing:-0.4px;"><i>1090</i></div>
<div class="c" style="left:210.00px;width:88.80px;letter-spacing:-0.6px;"><i>STARTED</i></div>
<div class="c" style="left:298.80px;width:102.30px;"><i>Garden and Sports</i></div>
<div class="c" style="left:401.10px;width:96.10px;letter-spacing:-0.45px;"></div>
<div class="c" style="left:497.20px;width:40.00px;"></div>
</div>
<div class="row" style="top:213px;height:16px;background:#87cefa;line-height:13.84px;">
<div class="c" style="left:0.00px;width:62.90px;padding-left:4.3px;letter-spacing:-0.4px;"><i>8</i></div>
<div class="c" style="left:62.90px;width:79.20px;letter-spacing:-0.4px;"><i>1177</i></div>
<div class="c" style="left:142.10px;width:67.90px;letter-spacing:-0.4px;"><i>1094</i></div>
<div class="c" style="left:210.00px;width:88.80px;letter-spacing:-0.6px;"><i>CHECKED</i></div>
<div class="c" style="left:298.80px;width:102.30px;"><i>Finished Goods Ware..</i></div>
<div class="c" style="left:401.10px;width:96.10px;letter-spacing:-0.45px;"></div>
<div class="c" style="left:497.20px;width:40.00px;"></div>
</div>
<div class="row" style="top:229px;height:15px;background:#87cefa;line-height:12.18px;">
<div class="c" style="left:0.00px;width:62.90px;padding-left:4.3px;letter-spacing:-0.4px;"><i>8</i></div>
<div class="c" style="left:62.90px;width:79.20px;letter-spacing:-0.4px;"><i>1202</i></div>
<div class="c" style="left:142.10px;width:67.90px;letter-spacing:-0.4px;"><i>1129</i></div>
<div class="c" style="left:210.00px;width:88.80px;letter-spacing:-0.6px;"><i>PRINTED</i></div>
<div class="c" style="left:298.80px;width:102.30px;"><i>Bikes &amp; Blades - East</i></div>
<div class="c" style="left:401.10px;width:96.10px;letter-spacing:-0.45px;"></div>
<div class="c" style="left:497.20px;width:40.00px;"></div>
</div>
<div class="row hl" style="top:244px;height:15px;background:#cd5c5c;line-height:12.52px;">
<div class="c" style="left:0.00px;width:62.90px;padding-left:4.3px;letter-spacing:-0.4px;"><i>10</i></div>
<div class="c" style="left:62.90px;width:79.20px;letter-spacing:-0.4px;"><i>1191</i></div>
<div class="c" style="left:142.10px;width:67.90px;letter-spacing:-0.4px;"><i>1107</i></div>
<div class="c" style="left:210.00px;width:88.80px;letter-spacing:-0.6px;"><i>STARTED</i></div>
<div class="c" style="left:298.80px;width:102.30px;"><i>Bayside Bikes</i></div>
<div class="c" style="left:401.10px;width:96.10px;letter-spacing:-0.45px;"></div>
<div class="c" style="left:497.20px;width:40.00px;"></div>
</div>
<div class="row" style="top:259px;height:15px;background:#87cefa;line-height:12.86px;">
<div class="c" style="left:0.00px;width:62.90px;padding-left:4.3px;letter-spacing:-0.4px;"><i>10</i></div>
<div class="c" style="left:62.90px;width:79.20px;letter-spacing:-0.4px;"><i>1194</i></div>
<div class="c" style="left:142.10px;width:67.90px;letter-spacing:-0.4px;"><i>1110</i></div>
<div class="c" style="left:210.00px;width:88.80px;letter-spacing:-0.6px;"><i>PRINTED</i></div>
<div class="c" style="left:298.80px;width:102.30px;"><i>Bayside Bikes</i></div>
<div class="c" style="left:401.10px;width:96.10px;letter-spacing:-0.45px;"></div>
<div class="c" style="left:497.20px;width:40.00px;"></div>
</div>
<div class="row hw" style="top:274px;height:15px;background:#ffffff;line-height:13.20px;color:#ff0000;font-weight:bold;font-style:italic;letter-spacing:-0.35px;">
<div class="c" style="left:0.00px;width:62.90px;padding-left:4.3px;"><i>10</i></div>
<div class="c" style="left:62.90px;width:79.20px;"><i>1129</i></div>
<div class="c" style="left:142.10px;width:67.90px;"><i>1039</i></div>
<div class="c" style="left:210.00px;width:88.80px;"><i>UNLOADED</i></div>
<div class="c" style="left:298.80px;width:102.30px;"><i>Bayside Bikes</i></div>
<div class="c" style="left:401.10px;width:96.10px;"></div>
<div class="c" style="left:497.20px;width:40.00px;"></div>
</div>
<div class="row" style="top:289px;height:15px;background:#87cefa;line-height:13.54px;">
<div class="c" style="left:0.00px;width:62.90px;padding-left:4.3px;letter-spacing:-0.4px;"><i>10</i></div>
<div class="c" style="left:62.90px;width:79.20px;letter-spacing:-0.4px;"><i>1151</i></div>
<div class="c" style="left:142.10px;width:67.90px;letter-spacing:-0.4px;"><i>1061</i></div>
<div class="c" style="left:210.00px;width:88.80px;letter-spacing:-0.6px;"><i>PICKED</i></div>
<div class="c" style="left:298.80px;width:102.30px;"><i>Bayside Bikes</i></div>
<div class="c" style="left:401.10px;width:96.10px;letter-spacing:-0.45px;"></div>
<div class="c" style="left:497.20px;width:40.00px;"></div>
</div>
<div class="row" style="top:304px;height:16px;background:#87cefa;line-height:13.88px;">
<div class="c" style="left:0.00px;width:62.90px;padding-left:4.3px;letter-spacing:-0.4px;"><i>10</i></div>
<div class="c" style="left:62.90px;width:79.20px;letter-spacing:-0.4px;"><i>1153</i></div>
<div class="c" style="left:142.10px;width:67.90px;letter-spacing:-0.4px;"><i>1063</i></div>
<div class="c" style="left:210.00px;width:88.80px;letter-spacing:-0.6px;"><i>PICKED</i></div>
<div class="c" style="left:298.80px;width:102.30px;"><i>Bayside Bikes</i></div>
<div class="c" style="left:401.10px;width:96.10px;letter-spacing:-0.45px;"></div>
<div class="c" style="left:497.20px;width:40.00px;"></div>
</div>
<div class="sb" style="left:0;top:430.00px;width:514px;height:12.5px">
<svg class="a" style="left:3.4px;top:3px" width="6" height="7" viewBox="0 0 6 7"><path d="M4.8 0.6L1.2 3.5L4.8 6.4" fill="none" stroke="#484848" stroke-width="1.6"/></svg>
<div class="thumb" style="left:14px;top:0;width:241px;height:12.5px"></div>
<svg class="a" style="left:504.5px;top:3px" width="6" height="7" viewBox="0 0 6 7"><path d="M1.2 0.6L4.8 3.5L1.2 6.4" fill="none" stroke="#484848" stroke-width="1.6"/></svg>
</div>
</div>
<svg class="a" style="left:3.8px;top:652.0px" width="9" height="10" viewBox="0 0 9 10"><rect x="1" y="2.5" width="5.5" height="6.5" fill="#fff" stroke="#333" stroke-width="1"/><path d="M2.5 5.5H5M2.5 7.3H5" stroke="#555" stroke-width="0.8"/><rect x="6" y="0.6" width="2" height="2" fill="#2a62c8"/><path d="M1 2.5L3 1" stroke="#333" stroke-width="0.8"/></svg>
<div class="btn" style="left:278.20px;top:645.20px;width:72.60px;height:16.80px;line-height:15.6px"><i>Refresh</i></div>
<div class="btn" style="left:357.40px;top:645.20px;width:80.60px;height:16.80px;line-height:15.6px"><i>Print Suggested</i></div>
<div class="btn" style="left:445.00px;top:645.20px;width:72.40px;height:16.80px;line-height:15.6px"><i>Print Actual</i></div>
</div>
<div class="panel" style="left:1053px">
<div class="t b" style="left:2.60px;top:-0.30px;font-size:10.5px;letter-spacing:0;line-height:13px;height:13px;color:#000;transform:scaleY(1.03);letter-spacing:0.14px">West - Western Route</div>
<div class="t " style="left:2.50px;top:24.96px;">Driver</div>
<div class="t " style="left:2.50px;top:45.96px;">Co-Driver</div>
<div class="t " style="left:2.50px;top:67.96px;letter-spacing:-0.6px">VRN</div>
<div class="t " style="left:3.70px;top:88.96px;letter-spacing:-0.14px">Waybill</div>
<div class="t " style="left:2.50px;top:111.96px;">Truck Mass / Volume</div>
<div class="t " style="left:2.50px;top:130.96px;letter-spacing:-0.37px">Loaded Orders</div>
<div class="t " style="left:2.50px;top:152.96px;letter-spacing:-0.45px">Loaded Volume</div>
<div class="t " style="left:2.50px;top:175.96px;letter-spacing:-0.49px">Loaded Mass</div>
<div class="box " style="left:100.10px;top:21.10px;width:144.90px;height:16.50px"><div class="dd"><svg class="a" style="left:2.4px;top:5.4px" width="8" height="5" viewBox="0 0 8 5"><path d="M0.6 0.6L3.9 3.9L7.2 0.6" fill="none" stroke="#575757" stroke-width="1"/></svg></div></div>
<div class="box " style="left:100.10px;top:42.40px;width:144.90px;height:16.50px"><div class="dd"><svg class="a" style="left:2.4px;top:5.4px" width="8" height="5" viewBox="0 0 8 5"><path d="M0.6 0.6L3.9 3.9L7.2 0.6" fill="none" stroke="#575757" stroke-width="1"/></svg></div></div>
<div class="box " style="left:100.10px;top:63.30px;width:144.90px;height:16.50px"><div class="dd"><svg class="a" style="left:2.4px;top:5.4px" width="8" height="5" viewBox="0 0 8 5"><path d="M0.6 0.6L3.9 3.9L7.2 0.6" fill="none" stroke="#575757" stroke-width="1"/></svg></div></div>
<div class="box " style="left:100.10px;top:85.40px;width:144.90px;height:16.60px"></div>
<div class="box ro" style="left:100.10px;top:106.40px;width:54.70px;height:16.30px"></div>
<div class="t " style="left:170.40px;top:108.96px;">/</div>
<div class="box ro" style="left:189.00px;top:106.40px;width:56.00px;height:16.30px"></div>
<div class="box ro" style="left:100.10px;top:128.20px;width:54.70px;height:16.40px"></div><div class="t" style="right:367.20px;top:130.96px;letter-spacing:-0.4px">0</div>
<div class="box ro" style="left:100.10px;top:149.40px;width:79.70px;height:16.30px"></div><div class="t" style="right:342.20px;top:151.96px;letter-spacing:-0.4px">0</div>
<div class="t " style="left:183.90px;top:150.96px;">m</div>
<div class="t " style="left:196.00px;top:148.95px;font-size:6.5px;">3</div>
<div class="box ro" style="left:100.10px;top:171.30px;width:79.70px;height:16.30px"></div><div class="t" style="right:342.20px;top:173.96px;letter-spacing:-0.4px">0</div>
<div class="t " style="left:185.50px;top:175.96px;letter-spacing:-0.7px">KG&#x27;s</div>
<div class="t b" style="left:269.60px;top:24.13px;font-size:9px;letter-spacing:-0.12px;text-decoration:underline">Accumulative Totals </div>
<div class="t " style="left:269.60px;top:45.96px;">Total Orders</div>
<div class="t " style="left:269.60px;top:66.96px;">Total Volume</div>
<div class="t " style="left:269.60px;top:88.96px;">Total Mass</div>
<div class="t " style="left:269.60px;top:109.96px;">Mass Tolerance</div>
<div class="t " style="left:269.60px;top:131.96px;">Actual Mass</div>
<div class="t " style="left:269.60px;top:154.96px;">Track ID Mass</div>
<div class="box ro" style="left:343.20px;top:42.40px;width:54.80px;height:16.30px"></div><div class="t" style="right:124.00px;top:44.96px;letter-spacing:-0.4px">0</div>
<div class="box ro" style="left:343.20px;top:64.00px;width:79.70px;height:16.70px"></div><div class="t" style="right:99.10px;top:65.96px;letter-spacing:-0.4px">0</div>
<div class="t " style="left:428.50px;top:65.96px;">m</div>
<div class="t " style="left:440.40px;top:63.95px;font-size:6.5px;">3</div>
<div class="box ro" style="left:343.20px;top:85.40px;width:79.70px;height:16.40px"></div><div class="t" style="right:99.10px;top:87.96px;letter-spacing:-0.4px">0</div>
<div class="t " style="left:429.00px;top:89.96px;letter-spacing:-0.7px">KG&#x27;s</div>
<div class="box ro" style="left:343.20px;top:107.40px;width:54.80px;height:16.10px"></div><div class="t" style="right:124.00px;top:109.96px;letter-spacing:-0.4px">10</div>
<div class="t " style="left:405.80px;top:110.32px;font-size:8.4px;letter-spacing:0">%</div>
<div class="box ro" style="left:343.20px;top:129.10px;width:79.70px;height:16.10px"></div><div class="t" style="right:99.10px;top:130.96px;letter-spacing:-0.4px">0</div>
<div class="t " style="left:429.00px;top:131.96px;letter-spacing:-0.7px">KG&#x27;s</div>
<div class="box " style="left:343.20px;top:150.30px;width:79.70px;height:16.20px"></div><div class="t" style="right:99.10px;top:152.96px;letter-spacing:-0.4px">0</div>
<div class="t " style="left:429.00px;top:153.96px;letter-spacing:-0.7px">KG&#x27;s</div>
<div class="grid" style="left:2.00px;top:195.00px;width:516.00px;height:444.00px">
<div class="gp"><div class="prompt">Drag a column header here to group by that column.</div>
<div class="tb" style="left:372.10px"><svg width="18" height="18" viewBox="0 0 18 18"><defs><linearGradient id="gh" x1="0" y1="0" x2="0" y2="1"><stop offset="0" stop-color="#7fa8ee"/><stop offset="1" stop-color="#c9dcfa"/></linearGradient></defs><rect x="2.6" y="4.6" width="9" height="8" fill="#fff" stroke="#8fa9d6" stroke-width="0.8"/><rect x="2.3" y="4.3" width="9.6" height="2.6" fill="url(#gh)"/><path d="M2.4 12.7H11.8V7" fill="none" stroke="#2f55a4" stroke-width="1"/><rect x="4" y="8.6" width="2.2" height="1.8" fill="#c3d3ee"/><rect x="7" y="9.8" width="3.6" height="1.6" fill="#c3d3ee"/><path d="M8.1 10.2L8.6 8.2L13.2 3.6L14.8 5.1L10.1 9.8Z" fill="#f2d35c" stroke="#a5882a" stroke-width="0.5"/><path d="M13.2 3.6L14 2.9Q14.9 2.6 15.4 3.4Q15.8 4.2 14.8 5.1Z" fill="#e0604f"/><path d="M8.1 10.2L8.45 8.9L9.4 9.8Z" fill="#333"/></svg></div>
<div class="tb" style="left:396.10px"><svg width="18" height="18" viewBox="0 0 18 18"><path d="M5.5 5.5A4.25 4.25 0 1 1 5.1 11.1" fill="none" stroke="#164a9c" stroke-width="1.8"/><path d="M3.2 3.5V7.8H7.6Z" fill="#164a9c"/></svg></div>
<div class="tb" style="left:420.10px"><svg width="18" height="18" viewBox="0 0 18 18"><path d="M4.4 7.6A4.3 4.3 0 0 1 12.1 5.5" fill="none" stroke="#164a9c" stroke-width="1.8"/><path d="M13 8.8A4.3 4.3 0 0 1 5.3 10.9" fill="none" stroke="#164a9c" stroke-width="1.8"/><path d="M13.9 2.9V7H9.8Z" fill="#164a9c"/><path d="M3.5 13.5V9.4H7.6Z" fill="#164a9c"/></svg></div>
<div class="tb" style="left:444.10px"><svg width="18" height="18" viewBox="0 0 18 18"><path d="M5.8 7.4V3.9H10.6L11.9 5.2V7.4" fill="#fff" stroke="#164a9c" stroke-width="1.2"/><path d="M4.5 7H13Q14 7 14 8V10.6H3.4V8Q3.4 7 4.5 7Z" fill="#164a9c"/><rect x="5.8" y="10" width="6" height="2.8" fill="#e4e9f2" stroke="#164a9c" stroke-width="1.2"/></svg></div>
<div class="tb" style="left:468.10px"><svg width="18" height="18" viewBox="0 0 18 18"><path d="M4.2 3.6H10.2L12.7 6.1V13.4H4.2Z" fill="#fff" stroke="#2f5fae" stroke-width="1.1" stroke-linejoin="round"/><path d="M10 3.8V6.3H12.5" fill="none" stroke="#2f5fae" stroke-width="0.9"/><path d="M5.8 12C7.2 10.6 8.2 8.4 8 6.9C7.7 6.2 7.2 7 7.6 8.2C8.2 9.7 9.5 10.8 11.1 10.8C11.7 10.4 10.5 10 9.2 10.3C7.8 10.6 6.5 11.3 5.8 12Z" fill="none" stroke="#2f5fae" stroke-width="0.75"/></svg></div>
<div class="tb" style="left:492.10px"><svg width="18" height="18" viewBox="0 0 18 18"><path d="M4.2 3.6H10.2L12.7 6.1V13.4H4.2Z" fill="#fff" stroke="#2f5fae" stroke-width="1.1" stroke-linejoin="round"/><path d="M10 3.8V6.3H12.5" fill="none" stroke="#2f5fae" stroke-width="0.9"/><path d="M6.3 7.9L9.9 12.3M9.9 7.9L6.3 12.3" fill="none" stroke="#2f5fae" stroke-width="1.1"/><path d="M5.8 12.4H7.2M9 12.4H10.4M5.9 7.8H7.1M9.1 7.8H10.3" stroke="#2f5fae" stroke-width="0.7"/></svg></div>
</div>
<div class="hdr">
<div class="hc" style="left:0.00px;width:62.90px"><span>Seq</span>
<svg class="a" style="left:40.90px;top:6.0px" width="8" height="10" viewBox="0 0 8 10"><path d="M0 0H7.6V2.8H6.8L6.4 1.5H2.7L5.1 4.8L2.7 8H6.4L6.9 6.7H7.6V9.4H0V8.3L2.6 4.8L0 1.3Z" fill="#000"/></svg>
<svg class="a" style="left:51.30px;top:7.0px" width="9" height="9" viewBox="0 0 9 9"><path d="M0.6 0.8H8.2L5.3 4.2V7.6L3.5 6.6V4.2Z" fill="#f4f4f4" stroke="#111" stroke-width="1.1" stroke-linejoin="round"/></svg>
</div>
<div class="hc" style="left:62.90px;width:79.20px"><span>MSN</span>
<svg class="a" style="left:57.20px;top:6.0px" width="8" height="10" viewBox="0 0 8 10"><path d="M0 0H7.6V2.8H6.8L6.4 1.5H2.7L5.1 4.8L2.7 8H6.4L6.9 6.7H7.6V9.4H0V8.3L2.6 4.8L0 1.3Z" fill="#000"/></svg>
<svg class="a" style="left:67.60px;top:7.0px" width="9" height="9" viewBox="0 0 9 9"><path d="M0.6 0.8H8.2L5.3 4.2V7.6L3.5 6.6V4.2Z" fill="#f4f4f4" stroke="#111" stroke-width="1.1" stroke-linejoin="round"/></svg>
</div>
<div class="hc" style="left:142.10px;width:67.90px"><span>P/Slip#</span>
<svg class="a" style="left:45.90px;top:6.0px" width="8" height="10" viewBox="0 0 8 10"><path d="M0 0H7.6V2.8H6.8L6.4 1.5H2.7L5.1 4.8L2.7 8H6.4L6.9 6.7H7.6V9.4H0V8.3L2.6 4.8L0 1.3Z" fill="#000"/></svg>
<svg class="a" style="left:56.30px;top:7.0px" width="9" height="9" viewBox="0 0 9 9"><path d="M0.6 0.8H8.2L5.3 4.2V7.6L3.5 6.6V4.2Z" fill="#f4f4f4" stroke="#111" stroke-width="1.1" stroke-linejoin="round"/></svg>
</div>
<div class="hc" style="left:210.00px;width:88.80px"><span>P/SlipStatus</span>
<svg class="a" style="left:66.80px;top:6.0px" width="8" height="10" viewBox="0 0 8 10"><path d="M0 0H7.6V2.8H6.8L6.4 1.5H2.7L5.1 4.8L2.7 8H6.4L6.9 6.7H7.6V9.4H0V8.3L2.6 4.8L0 1.3Z" fill="#000"/></svg>
<svg class="a" style="left:77.20px;top:7.0px" width="9" height="9" viewBox="0 0 9 9"><path d="M0.6 0.8H8.2L5.3 4.2V7.6L3.5 6.6V4.2Z" fill="#f4f4f4" stroke="#111" stroke-width="1.1" stroke-linejoin="round"/></svg>
</div>
<div class="hc" style="left:298.80px;width:102.30px"><span>CustomerName</span>
<svg class="a" style="left:80.30px;top:6.0px" width="8" height="10" viewBox="0 0 8 10"><path d="M0 0H7.6V2.8H6.8L6.4 1.5H2.7L5.1 4.8L2.7 8H6.4L6.9 6.7H7.6V9.4H0V8.3L2.6 4.8L0 1.3Z" fill="#000"/></svg>
<svg class="a" style="left:90.70px;top:7.0px" width="9" height="9" viewBox="0 0 9 9"><path d="M0.6 0.8H8.2L5.3 4.2V7.6L3.5 6.6V4.2Z" fill="#f4f4f4" stroke="#111" stroke-width="1.1" stroke-linejoin="round"/></svg>
</div>
<div class="hc" style="left:401.10px;width:96.10px"><span>Inv/DNote</span>
<svg class="a" style="left:74.10px;top:6.0px" width="8" height="10" viewBox="0 0 8 10"><path d="M0 0H7.6V2.8H6.8L6.4 1.5H2.7L5.1 4.8L2.7 8H6.4L6.9 6.7H7.6V9.4H0V8.3L2.6 4.8L0 1.3Z" fill="#000"/></svg>
<svg class="a" style="left:84.50px;top:7.0px" width="9" height="9" viewBox="0 0 9 9"><path d="M0.6 0.8H8.2L5.3 4.2V7.6L3.5 6.6V4.2Z" fill="#f4f4f4" stroke="#111" stroke-width="1.1" stroke-linejoin="round"/></svg>
</div>
<div class="hc" style="left:497.20px;width:40.00px"><span>Cor</span>
</div>
</div>
<div class="row" style="top:47px;height:15px;background:#87cefa;line-height:12.10px;">
<div class="c" style="left:0.00px;width:62.90px;padding-left:4.3px;letter-spacing:-0.4px;"><i>8</i></div>
<div class="c" style="left:62.90px;width:79.20px;letter-spacing:-0.4px;"><i>1172</i></div>
<div class="c" style="left:142.10px;width:67.90px;letter-spacing:-0.4px;"><i>1088</i></div>
<div class="c" style="left:210.00px;width:88.80px;letter-spacing:-0.6px;"></div>
<div class="c" style="left:298.80px;width:102.30px;"></div>
<div class="c" style="left:401.10px;width:96.10px;letter-spacing:-0.45px;"></div>
<div class="c" style="left:497.20px;width:40.00px;"></div>
</div>
<div class="row" style="top:62px;height:15px;background:#87cefa;line-height:12.50px;">
<div class="c" style="left:0.00px;width:62.90px;padding-left:4.3px;letter-spacing:-0.4px;"><i>10</i></div>
<div class="c" style="left:62.90px;width:79.20px;letter-spacing:-0.4px;"><i>1193</i></div>
<div class="c" style="left:142.10px;width:67.90px;letter-spacing:-0.4px;"><i>1109</i></div>
<div class="c" style="left:210.00px;width:88.80px;letter-spacing:-0.6px;"></div>
<div class="c" style="left:298.80px;width:102.30px;"></div>
<div class="c" style="left:401.10px;width:96.10px;letter-spacing:-0.45px;"></div>
<div class="c" style="left:497.20px;width:40.00px;"></div>
</div>
<div class="sb" style="left:0;top:430.00px;width:514px;height:12.5px">
<svg class="a" style="left:3.4px;top:3px" width="6" height="7" viewBox="0 0 6 7"><path d="M4.8 0.6L1.2 3.5L4.8 6.4" fill="none" stroke="#484848" stroke-width="1.6"/></svg>
<div class="thumb" style="left:14px;top:0;width:241px;height:12.5px"></div>
<svg class="a" style="left:504.5px;top:3px" width="6" height="7" viewBox="0 0 6 7"><path d="M1.2 0.6L4.8 3.5L1.2 6.4" fill="none" stroke="#484848" stroke-width="1.6"/></svg>
</div>
</div>
<svg class="a" style="left:3.8px;top:652.0px" width="9" height="10" viewBox="0 0 9 10"><rect x="1" y="2.5" width="5.5" height="6.5" fill="#fff" stroke="#333" stroke-width="1"/><path d="M2.5 5.5H5M2.5 7.3H5" stroke="#555" stroke-width="0.8"/><rect x="6" y="0.6" width="2" height="2" fill="#2a62c8"/><path d="M1 2.5L3 1" stroke="#333" stroke-width="0.8"/></svg>
<div class="btn" style="left:278.20px;top:645.20px;width:72.60px;height:16.80px;line-height:15.6px"><i>Refresh</i></div>
<div class="btn" style="left:357.40px;top:645.20px;width:80.60px;height:16.80px;line-height:15.6px"><i>Print Suggested</i></div>
<div class="btn" style="left:445.00px;top:645.20px;width:72.40px;height:16.80px;line-height:15.6px"><i>Print Actual</i></div>
</div>
<div class="sb" style="left:0;top:669px;width:1231px;height:18px">
<svg class="a" style="left:3.5px;top:6px" width="6" height="7" viewBox="0 0 6 7"><path d="M4.8 0.6L1.2 3.5L4.8 6.4" fill="none" stroke="#484848" stroke-width="1.6"/></svg>
<div class="thumb" style="left:313.7px;top:3.7px;width:707px;height:11.3px"></div>
<svg class="a" style="left:1221.6px;top:6px" width="6" height="7" viewBox="0 0 6 7"><path d="M1.2 0.6L4.8 3.5L1.2 6.4" fill="none" stroke="#484848" stroke-width="1.6"/></svg>
</div>
<div class="btn" style="left:3px;top:691px;width:103px;height:20px;border:2px solid #0078d7;line-height:16.4px;letter-spacing:-0.55px;font-size:9.5px"><i>Reset Problem Routes</i></div>
<div class="btn" style="left:1167.8px;top:691px;width:60.4px;height:19.6px;line-height:18.2px"><i>Refresh</i></div>
</div>
</body></html>
